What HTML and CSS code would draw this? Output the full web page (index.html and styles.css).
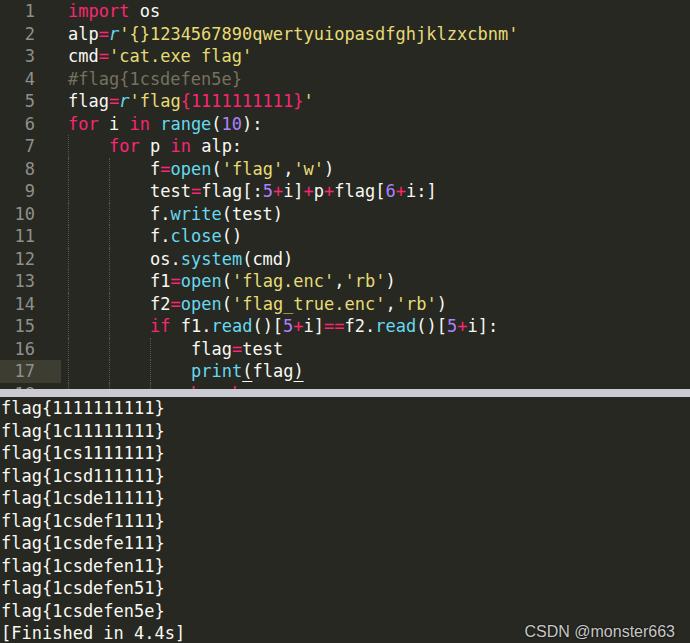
FILE: index.html
```html
<html lang="en">
<head>
    <meta charset="UTF-8">
    <title>exp.py</title>
    <link rel="stylesheet" href="styles.css">
</head>
<body>
    <div class="editor">
        <div class="ln"><span class="num">1</span><span class="code"><span class="kw">import</span> os</span></div>
        <div class="ln"><span class="num">2</span><span class="code">alp<span class="op">=</span><span class="pre">r</span><span class="str">'{}1234567890qwertyuiopasdfghjklzxcbnm'</span></span></div>
        <div class="ln"><span class="num">3</span><span class="code">cmd<span class="op">=</span><span class="str">'cat.exe flag'</span></span></div>
        <div class="ln"><span class="num">4</span><span class="code"><span class="cm">#flag{1csdefen5e}</span></span></div>
        <div class="ln"><span class="num">5</span><span class="code">flag<span class="op">=</span><span class="pre">r</span><span class="str">'flag</span><span class="op">{1111111111}</span><span class="str">'</span></span></div>
        <div class="ln"><span class="num">6</span><span class="code"><span class="kw">for</span> i <span class="kw">in</span> <span class="fn">range</span>(<span class="nm">10</span>):</span></div>
        <div class="ln"><span class="num">7</span><span class="code"><span class="ind"></span><span class="kw">for</span> p <span class="kw">in</span> alp:</span></div>
        <div class="ln"><span class="num">8</span><span class="code"><span class="ind"></span><span class="ind"></span>f<span class="op">=</span><span class="fn">open</span>(<span class="str">'flag'</span>,<span class="str">'w'</span>)</span></div>
        <div class="ln"><span class="num">9</span><span class="code"><span class="ind"></span><span class="ind"></span>test<span class="op">=</span>flag[:<span class="nm">5</span><span class="op">+</span>i]<span class="op">+</span>p<span class="op">+</span>flag[<span class="nm">6</span><span class="op">+</span>i:]</span></div>
        <div class="ln"><span class="num">10</span><span class="code"><span class="ind"></span><span class="ind"></span>f.<span class="fn">write</span>(test)</span></div>
        <div class="ln"><span class="num">11</span><span class="code"><span class="ind"></span><span class="ind"></span>f.<span class="fn">close</span>()</span></div>
        <div class="ln"><span class="num">12</span><span class="code"><span class="ind"></span><span class="ind"></span>os.<span class="fn">system</span>(cmd)</span></div>
        <div class="ln"><span class="num">13</span><span class="code"><span class="ind"></span><span class="ind"></span>f1<span class="op">=</span><span class="fn">open</span>(<span class="str">'flag.enc'</span>,<span class="str">'rb'</span>)</span></div>
        <div class="ln"><span class="num">14</span><span class="code"><span class="ind"></span><span class="ind"></span>f2<span class="op">=</span><span class="fn">open</span>(<span class="str">'flag_true.enc'</span>,<span class="str">'rb'</span>)</span></div>
        <div class="ln"><span class="num">15</span><span class="code"><span class="ind"></span><span class="ind"></span><span class="kw">if</span> f1.<span class="fn">read</span>()[<span class="nm">5</span><span class="op">+</span>i]<span class="op">==</span>f2.<span class="fn">read</span>()[<span class="nm">5</span><span class="op">+</span>i]:</span></div>
        <div class="ln"><span class="num">16</span><span class="code"><span class="ind"></span><span class="ind"></span><span class="ind"></span>flag<span class="op">=</span>test</span></div>
        <div class="ln current"><span class="num">17</span><span class="code"><span class="ind"></span><span class="ind"></span><span class="ind"></span><span class="fn">print</span><span class="match">(</span>flag<span class="match">)</span></span></div>
        <div class="ln"><span class="num">18</span><span class="code"><span class="ind"></span><span class="ind"></span><span class="ind"></span><span class="kw">break</span></span></div>
    </div>

    <div class="splitter"></div>

    <div class="output">
        <div class="out">flag{1111111111}</div>
        <div class="out">flag{1c11111111}</div>
        <div class="out">flag{1cs1111111}</div>
        <div class="out">flag{1csd111111}</div>
        <div class="out">flag{1csde11111}</div>
        <div class="out">flag{1csdef1111}</div>
        <div class="out">flag{1csdefe111}</div>
        <div class="out">flag{1csdefen11}</div>
        <div class="out">flag{1csdefen51}</div>
        <div class="out">flag{1csdefen5e}</div>
        <div class="out">[Finished in 4.4s]</div>
        <span class="watermark">CSDN @monster663</span>
    </div>
</body>
</html>
```

FILE: styles.css
```css
* {
    margin: 0;
    padding: 0;
    box-sizing: border-box;
}

body {
    width: 690px;
    height: 643px;
    overflow: hidden;
    background-color: #272822;
    font-family: "DejaVu Sans Mono", "Liberation Mono", monospace;
    font-size: 17px;
    color: #f8f8f2;
}

.editor {
    height: 389px;
    overflow: hidden;
}

.ln {
    display: flex;
    height: 22.5px;
    line-height: 22.5px;
    white-space: pre;
}

.num {
    width: 61px;
    flex-shrink: 0;
    padding-right: 26px;
    text-align: right;
    color: #8f908a;
}

.current .num {
    background-color: #3e3d32;
}

.code {
    padding-left: 7px;
}

.ind {
    display: inline-block;
    vertical-align: top;
    width: 41px;
    height: 22.5px;
    border-left: 1px dotted #55564e;
}

.kw { color: #f92672; }
.op { color: #f92672; }
.str { color: #e6db74; }
.nm { color: #ae81ff; }
.fn { color: #66d9ef; }
.cm { color: #75715e; }
.pre { color: #66d9ef; font-style: italic; }

.match {
    text-decoration: underline;
    text-underline-offset: 4px;
}

.splitter {
    height: 8px;
    background-color: #c9cbd1;
}

.output {
    position: relative;
    height: 246px;
    padding-left: 1px;
}

.out {
    height: 22.5px;
    line-height: 22.5px;
    white-space: pre;
}

.watermark {
    position: absolute;
    right: 15px;
    bottom: 1px;
    font-family: "Liberation Sans", Arial, sans-serif;
    font-size: 16px;
    line-height: 20px;
    color: #c8c8c8;
    text-shadow: 0 0 2px #000;
}
```
